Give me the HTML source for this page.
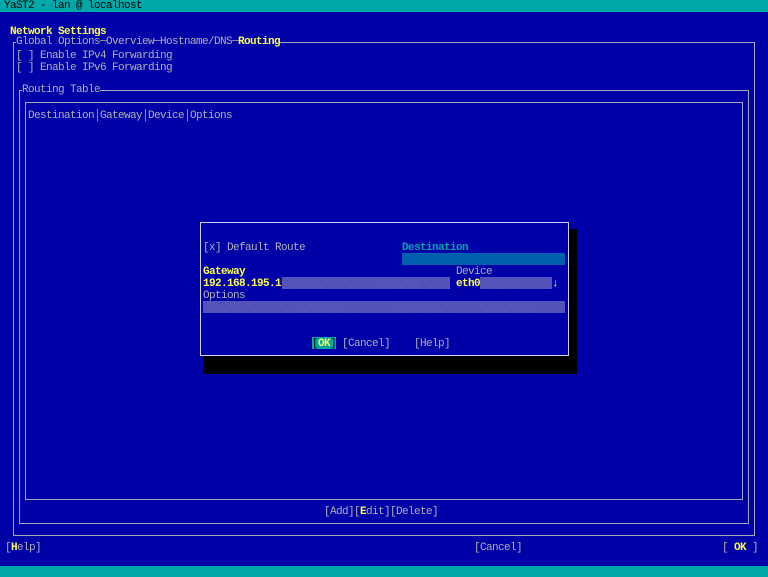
<!DOCTYPE html>
<html><head><meta charset="utf-8"><style>
*{margin:0;padding:0;box-sizing:border-box}
body{width:768px;height:577px;background:#0000a8;position:relative;overflow:hidden;font-family:"Liberation Mono","DejaVu Sans Mono",monospace;font-size:11px;letter-spacing:-0.6px;line-height:12px;color:#b0b0b0}
.t{position:absolute;white-space:pre;height:12px;margin-top:2px}
.y{color:#fcfc54;font-weight:bold}
.b{position:absolute;border:1px solid #a8a8b8}
.bg{position:absolute;background:#0000a8}
.f{position:absolute}
.h{background:repeating-linear-gradient(45deg,#5c5cc0 0 1px,#4a4ab4 1px 2px)}
</style></head><body>
<div class="f" style="left:0;top:0;width:768px;height:12px;background:#00a8a8"></div>
<div class="t" style="left:4px;top:-2px;color:#000">YaST2 - lan @ localhost</div>
<div class="f" style="left:0;top:566px;width:768px;height:11px;background:#00a8a8"></div>

<div class="t y" style="left:10px;top:24px">Network Settings</div>

<div class="b" style="left:13px;top:42px;width:742px;height:494px"></div>
<div class="b" style="left:19px;top:90px;width:730px;height:434px"></div>
<div class="b" style="left:25px;top:102px;width:718px;height:398px"></div>

<div class="bg t" style="left:16px;top:34px;height:13px">Global Options─Overview─Hostname/DNS─<span class="y">Routing</span></div>
<div class="t" style="left:16px;top:48px">[ ] Enable IPv4 Forwarding</div>
<div class="t" style="left:16px;top:60px">[ ] Enable IPv6 Forwarding</div>
<div class="bg t" style="left:22px;top:82px;height:13px">Routing Table</div>
<div class="t" style="left:28px;top:108px">Destination│Gateway│Device│Options</div>

<div class="f" style="left:203px;top:355px;width:374px;height:19px;background:#000"></div>
<div class="f" style="left:568px;top:229px;width:9px;height:145px;background:#000"></div>
<div class="f" style="left:200px;top:222px;width:369px;height:134px;background:#0000a8;border:1px solid #d0d0f0"></div>

<div class="t" style="left:203px;top:240px">[x] Default Route</div>
<div class="t" style="left:402px;top:240px;color:#00a8a8;font-weight:bold">Destination</div>
<div class="f" style="left:402px;top:253px;width:163px;height:12px;background:#0060b0"></div>
<div class="t y" style="left:203px;top:264px">Gateway</div>
<div class="t" style="left:456px;top:264px">Device</div>
<div class="t y" style="left:203px;top:276px">192.168.195.1</div>
<div class="f h" style="left:282px;top:277px;width:168px;height:12px"></div>
<div class="t y" style="left:456px;top:276px">eth0</div>
<div class="f h" style="left:480px;top:277px;width:72px;height:12px"></div>
<div class="t y" style="left:552px;top:276px">↓</div>
<div class="t" style="left:203px;top:288px">Options</div>
<div class="f h" style="left:203px;top:301px;width:362px;height:12px"></div>

<div class="f" style="left:312px;top:337px;width:24px;height:12px;background:#00a8a8"></div>
<div class="t" style="left:312px;top:336px;color:#000">[<span class="y">OK</span>]</div>
<div class="t" style="left:342px;top:336px">[Cancel]</div>
<div class="t" style="left:414px;top:336px">[Help]</div>

<div class="t" style="left:324px;top:504px">[Add][<span class="y">E</span>dit][Delete]</div>
<div class="t" style="left:5px;top:540px">[<span class="y">H</span>elp]</div>
<div class="t" style="left:474px;top:540px">[Cancel]</div>
<div class="t" style="left:722px;top:540px">[ <span class="y">OK</span> ]</div>
</body></html>
